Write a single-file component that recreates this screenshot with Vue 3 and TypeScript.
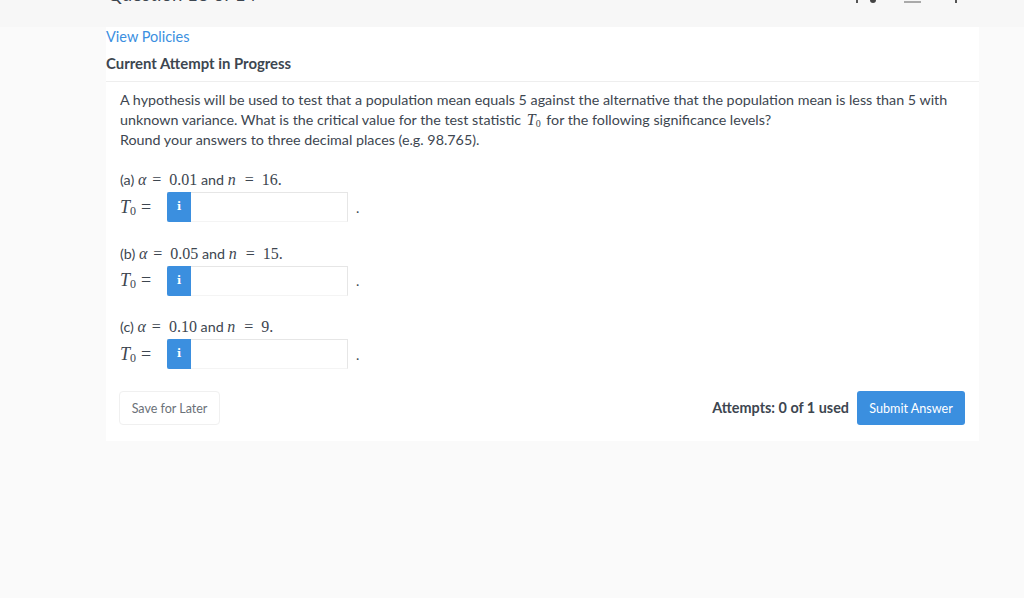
<script setup lang="ts">
type Part = { label: string; alpha: string; n: string };

const parts: Part[] = [
  { label: "(a)", alpha: "0.01", n: "16" },
  { label: "(b)", alpha: "0.05", n: "15" },
  { label: "(c)", alpha: "0.10", n: "9" },
];
</script>

<template>
  <div class="page">
    <header class="topbar">
      <span class="question-no">Question 13 of 14</span>
      <div class="top-tools">
        <span class="tool-tick"></span>
        <span class="tool-dot"></span>
        <span class="tool-bars"></span>
        <span class="tool-tick"></span>
      </div>
    </header>

    <main class="card">
      <a class="policies">View Policies</a>
      <h2 class="attempt">Current Attempt in Progress</h2>

      <section class="question">
        <p class="prompt">
          A hypothesis will be used to test that a population mean equals 5 against the alternative that the population mean is less than 5 with
          unknown variance. What is the critical value for the test statistic
          <span class="math stat"><i>T</i><sub>0</sub></span>
          for the following significance levels?<br />
          Round your answers to three decimal places (e.g. 98.765).
        </p>

        <div v-for="p in parts" :key="p.label" class="part">
          <div class="part-line">
            {{ p.label }}
            <span class="math"><i>α</i><span class="eq">=</span>{{ p.alpha }}</span>
            and
            <span class="math"><i>n</i><span class="eq wide">=</span>{{ p.n }}.</span>
          </div>
          <div class="answer-line">
            <span class="math t-label"><i>T</i><sub>0</sub><span class="eq tight">=</span></span>
            <div class="answer-box">
              <span class="info">i</span>
              <span class="field"></span>
            </div>
            <span class="period">.</span>
          </div>
        </div>

        <div class="actions">
          <button class="save" type="button">Save for Later</button>
          <div class="submit-group">
            <span class="used">Attempts: 0 of 1 used</span>
            <button class="submit" type="button">Submit Answer</button>
          </div>
        </div>
      </section>
    </main>
  </div>
</template>

<style>
html,
body {
  margin: 0;
  background: #fafafa;
}
</style>

<style scoped>
.page {
  min-height: 598px;
  background: #fafafa;
  font-family: Lato, "Open Sans", sans-serif;
  color: #3d4650;
  overflow: hidden;
}
.topbar {
  height: 27px;
  background: #f7f7f7;
  display: flex;
  justify-content: space-between;
  align-items: flex-end;
  padding: 0 67px 0 107px;
  box-sizing: border-box;
  overflow: hidden;
}
.question-no {
  font-size: 18.6px;
  line-height: 24px;
  margin-bottom: 21px;
  flex: none;
}
.top-tools {
  display: flex;
  align-items: flex-end;
  margin-bottom: 24px;
  flex: none;
}
.tool-dot {
  width: 6px;
  height: 6px;
  margin-left: 12px;
  border-radius: 50%;
  background: #444;
}
.tool-bars {
  width: 17px;
  height: 2px;
  margin: 0 34px 0 28px;
  background: #aaa;
}
.tool-tick {
  width: 2px;
  height: 3px;
  background: #555;
}
.card {
  width: 873px;
  height: 414px;
  margin-left: 106px;
  background: #fff;
  box-sizing: border-box;
  display: flex;
  flex-direction: column;
}
.policies {
  color: #3b8fdf;
  font-size: 14.5px;
  line-height: 20px;
}
.attempt {
  margin: 7px 0 0;
  font-size: 14.9px;
  line-height: 19px;
  font-weight: 700;
  color: #3d4650;
  padding-bottom: 8px;
  border-bottom: 1px solid #eeeeee;
}
.question {
  padding: 8px 14px 0;
  flex: 1;
  display: flex;
  flex-direction: column;
}
.prompt {
  margin: 0;
  font-size: 14.3px;
  line-height: 20px;
}
.math {
  font-family: "Liberation Serif", serif;
  font-size: 16px;
}
.stat {
  margin: 0 2px;
}
.math sub {
  font-size: 10px;
  line-height: 0;
  vertical-align: -2px;
}
.t-label sub {
  font-size: 12px;
}
.eq {
  margin: 0 8px 0 6px;
}
.eq.wide {
  margin: 0 8px 0 9px;
}
.eq.tight {
  margin: 0 0 0 5px;
  font-size: 18px;
}
.part {
  margin-top: 20px;
  height: 53.5px;
}
.part-line {
  font-size: 14.3px;
  line-height: 20px;
}
.answer-line {
  display: flex;
  align-items: center;
  height: 30px;
  margin-top: 2px;
}
.t-label {
  width: 47px;
  flex: none;
  font-size: 18px;
}
.answer-box {
  display: flex;
  width: 181px;
  height: 30px;
  box-sizing: border-box;
  border: 1px solid #e6e6e6;
  border-left: 0;
  border-bottom-color: #f4f4f4;
}
.info {
  width: 24px;
  flex: none;
  background: #3b8fdf;
  color: #fff;
  font-family: "DejaVu Serif", serif;
  font-size: 11px;
  font-weight: 700;
  text-align: center;
  line-height: 30px;
  border-radius: 2px 0 0 2px;
  margin: -1px 0;
  height: 30px;
}
.field {
  flex: 1;
}
.period {
  margin-left: 8px;
  font-size: 14px;
}
.actions {
  display: flex;
  justify-content: space-between;
  align-items: center;
  margin-top: 20.5px;
}
.save {
  width: 101px;
  height: 34px;
  margin-left: -1px;
  background: #fff;
  border: 1px solid #f0f0f0;
  border-radius: 4px;
  color: #6b7178;
  font-family: inherit;
  font-size: 12.5px;
  padding: 0;
}
.submit-group {
  display: flex;
  align-items: center;
  gap: 8px;
}
.used {
  font-size: 14.4px;
  font-weight: 700;
  margin-bottom: 2px;
}
.submit {
  width: 108px;
  height: 34px;
  background: #3b8fdf;
  border: 0;
  border-radius: 3px;
  color: #fff;
  font-family: inherit;
  font-size: 12.6px;
  padding: 0;
}
</style>
